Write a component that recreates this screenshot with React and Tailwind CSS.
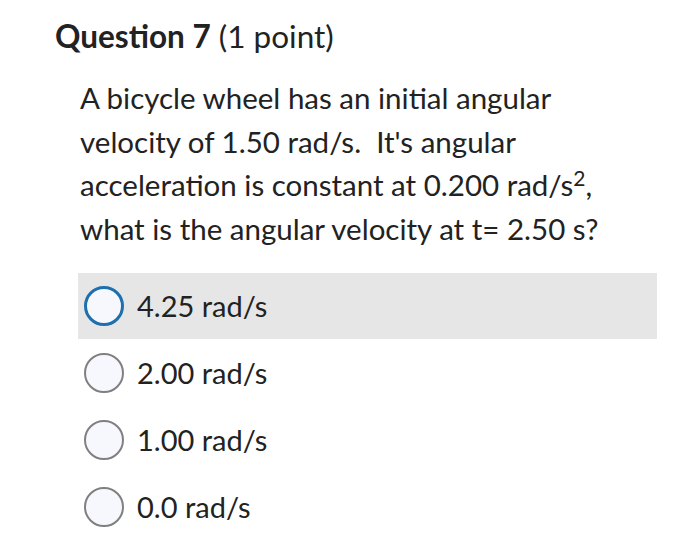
export default function App() {
  const options = [
    { label: "4.25 rad/s", selected: true },
    { label: "2.00 rad/s" },
    { label: "1.00 rad/s" },
    { label: "0.0 rad/s" },
  ];
  return (
    <div className="w-[700px] h-[556px] bg-white text-[#222] overflow-hidden" style={{ fontFamily: "Lato, 'Noto Sans', sans-serif" }}>
      <div className="pl-[55px] pt-[18px]">
        <h1 className="text-[31.5px] leading-[36px]">
          <span className="font-bold">Question 7</span> <span>(1 point)</span>
        </h1>
      </div>
      <div className="pl-[80px] pt-[22px] pr-[40px]">
        <p className="text-[29.5px] leading-[43.5px]">
          A bicycle wheel has an initial angular<br />
          velocity of 1.50 rad/s.&nbsp; It's angular<br />
          acceleration is constant at 0.200 rad/s<sup className="text-[21px]">2</sup>,<br />
          what is the angular velocity at t= 2.50 s?
        </p>
      </div>
      <div className="pl-[78px] pr-[43px] pt-[23px] flex flex-col">
        {options.map((o) => (
          <div
            key={o.label}
            className={`h-[66px] flex items-center gap-[13px] pl-[6px] ${o.selected ? "bg-[#e6e6e6]" : ""} mb-[1px]`}
          >
            <span
              className={`w-[40px] h-[40px] rounded-full bg-[#f6f8fd] shrink-0 ${o.selected ? "border-[3px] border-[#1d6fae]" : "border-2 border-[#808080]"}`}
            />
            <span className="text-[29px]">{o.label}</span>
          </div>
        ))}
      </div>
    </div>
  );
}
